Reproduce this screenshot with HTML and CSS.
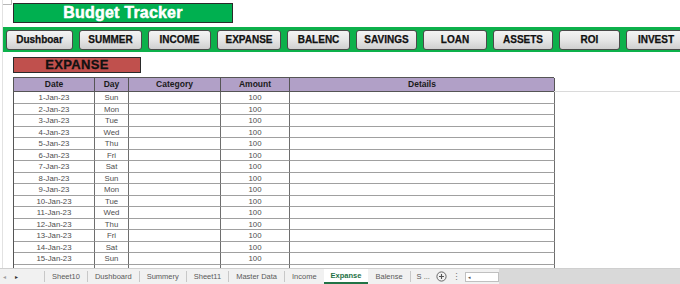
FILE: index.html
```html
<!DOCTYPE html>
<html>
<head>
<meta charset="utf-8">
<link rel="stylesheet" href="styles.css">
</head>
<body>
<div class="app">
  <div class="sheet">
    <div class="top-row">
      <div class="corner"></div>
      <div class="title">Budget Tracker</div>
    </div>
    <div class="nav">
      <div class="btn">Dushboar</div>
      <div class="btn">SUMMER</div>
      <div class="btn">INCOME</div>
      <div class="btn">EXPANSE</div>
      <div class="btn">BALENC</div>
      <div class="btn">SAVINGS</div>
      <div class="btn">LOAN</div>
      <div class="btn">ASSETS</div>
      <div class="btn">ROI</div>
      <div class="btn">INVEST</div>
    </div>
    <div class="section-title">EXPANSE</div>
    <div class="table-row">
      <div class="table">
        <div class="th">Date</div><div class="th">Day</div><div class="th">Category</div><div class="th">Amount</div><div class="th">Details</div>
        <div class="td">1-Jan-23</div><div class="td">Sun</div><div class="td"></div><div class="td">100</div><div class="td"></div>
        <div class="td">2-Jan-23</div><div class="td">Mon</div><div class="td"></div><div class="td">100</div><div class="td"></div>
        <div class="td">3-Jan-23</div><div class="td">Tue</div><div class="td"></div><div class="td">100</div><div class="td"></div>
        <div class="td">4-Jan-23</div><div class="td">Wed</div><div class="td"></div><div class="td">100</div><div class="td"></div>
        <div class="td">5-Jan-23</div><div class="td">Thu</div><div class="td"></div><div class="td">100</div><div class="td"></div>
        <div class="td">6-Jan-23</div><div class="td">Fri</div><div class="td"></div><div class="td">100</div><div class="td"></div>
        <div class="td">7-Jan-23</div><div class="td">Sat</div><div class="td"></div><div class="td">100</div><div class="td"></div>
        <div class="td">8-Jan-23</div><div class="td">Sun</div><div class="td"></div><div class="td">100</div><div class="td"></div>
        <div class="td">9-Jan-23</div><div class="td">Mon</div><div class="td"></div><div class="td">100</div><div class="td"></div>
        <div class="td">10-Jan-23</div><div class="td">Tue</div><div class="td"></div><div class="td">100</div><div class="td"></div>
        <div class="td">11-Jan-23</div><div class="td">Wed</div><div class="td"></div><div class="td">100</div><div class="td"></div>
        <div class="td">12-Jan-23</div><div class="td">Thu</div><div class="td"></div><div class="td">100</div><div class="td"></div>
        <div class="td">13-Jan-23</div><div class="td">Fri</div><div class="td"></div><div class="td">100</div><div class="td"></div>
        <div class="td">14-Jan-23</div><div class="td">Sat</div><div class="td"></div><div class="td">100</div><div class="td"></div>
        <div class="td">15-Jan-23</div><div class="td">Sun</div><div class="td"></div><div class="td">100</div><div class="td"></div>
        <div class="td">16-Jan-23</div><div class="td">Mon</div><div class="td"></div><div class="td">100</div><div class="td"></div>
      </div>
      <div class="filler"></div>
    </div>
  </div>
  <div class="tabbar">
    <div class="arrows"><span class="arr">&#9666;</span><span class="arr dark">&#9656;</span></div>
    <div class="tab">Sheet10</div>
    <div class="tab">Dushboard</div>
    <div class="tab">Summery</div>
    <div class="tab">Sheet11</div>
    <div class="tab">Master Data</div>
    <div class="tab">Income</div>
    <div class="tab active">Expanse</div>
    <div class="tab">Balense</div>
    <div class="tab more">S ...</div>
    <div class="add">
      <svg width="11" height="11" viewBox="0 0 11 11"><circle cx="5.5" cy="5.5" r="4.6" fill="none" stroke="#666" stroke-width="1"/><path d="M5.5 3v5M3 5.5h5" stroke="#555" stroke-width="1.1"/></svg>
    </div>
    <div class="dots">&#8942;</div>
    <div class="hscroll">
      <div class="hthumb"><span class="harr">&#9666;</span></div>
      <div class="htrack"></div>
    </div>
  </div>
</div>
</body>
</html>
```

FILE: styles.css
```css
* { box-sizing: border-box; }
html, body { margin: 0; padding: 0; }
body {
  width: 680px;
  height: 284px;
  overflow: hidden;
  background: #fff;
  font-family: "Liberation Sans", Arial, sans-serif;
}
.app {
  display: flex;
  flex-direction: column;
  height: 284px;
}
.sheet {
  flex: 1;
  overflow: hidden;
  min-height: 0;
  border-left: 1px solid #e2e2e2;
  margin-left: 2px;
}
.top-row {
  display: flex;
  align-items: flex-start;
}
.corner {
  width: 9px;
  height: 5px;
  border-right: 1px solid #b8b8b8;
  border-bottom: 1px solid #b8b8b8;
}
.title {
  margin-top: 3px;
  margin-left: 1px;
  width: 220px;
  height: 20px;
  background: #00b050;
  border: 1px solid #2a2a2a;
  color: #fff;
  font-weight: bold;
  font-size: 16px;
  line-height: 18px;
  text-align: center;
  letter-spacing: 0.2px;
  -webkit-text-stroke: 0.5px #fff;
}
.nav {
  margin-top: 4px;
  height: 25px;
  background: #0db14b;
  padding: 3px 0 2px 3px;
  display: grid;
  grid-template-columns: 67px 63px 63px 64px 63px 61px 64px 60px 61px 60px;
  column-gap: 6px;
}
.btn {
  height: 20px;
  border: 1px solid #4a4a4a;
  border-radius: 3px;
  background: linear-gradient(#f4f4f4 0%, #e6e6e6 50%, #cfcfcf 100%);
  color: #111;
  font-weight: bold;
  font-size: 10px;
  line-height: 18px;
  text-align: center;
  white-space: nowrap;
  overflow: hidden;
  -webkit-text-stroke: 0.25px #111;
}
.section-title {
  margin: 5px 0 0 10px;
  width: 128px;
  height: 16px;
  background: #c0504d;
  border: 1px solid #2a2a2a;
  color: #111;
  font-weight: bold;
  font-size: 13px;
  line-height: 14px;
  text-align: center;
  letter-spacing: 0.3px;
  -webkit-text-stroke: 0.3px #111;
}
.table-row {
  display: flex;
  margin-top: 4px;
  margin-left: 10px;
  align-items: flex-start;
}
.table {
  display: grid;
  grid-template-columns: 81px 34px 92px 69px 265px;
  grid-template-rows: 14px;
  grid-auto-rows: 11.5px;
  width: 541px;
  border-top: 1px solid #555;
  border-left: 1px solid #555;
}
.th {
  background: #b1a0c7;
  border-right: 1px solid #555;
  border-bottom: 1px solid #555;
  font-weight: bold;
  font-size: 8.5px;
  line-height: 13px;
  color: #1a1a1a;
  text-align: center;
}
.td {
  border-right: 1px solid #6e6e6e;
  border-bottom: 1px solid #a0a0a0;
  font-size: 7.8px;
  line-height: 11px;
  color: #4d4d4d;
  text-align: center;
  white-space: nowrap;
  overflow: hidden;
}
.filler {
  flex: 1;
  height: 15px;
  border-bottom: 1px solid #dadada;
}
.tabbar {
  height: 16px;
  flex: none;
  display: flex;
  align-items: stretch;
  background: #f1f1f1;
  border-top: 1px solid #cfcfcf;
  font-size: 7.5px;
  color: #5a5a5a;
}
.arrows {
  width: 45px;
  display: flex;
  align-items: center;
  padding-left: 3px;
  gap: 9px;
  border-right: 1px solid #c8c8c8;
  margin: 2px 0;
  font-size: 6px;
  color: #a0a0a0;
}
.arr.dark { color: #333; }
.tab {
  padding: 0 7px;
  display: flex;
  align-items: center;
  border-right: 1px solid #c8c8c8;
  margin: 2px 0;
  white-space: nowrap;
}
.tab.active {
  margin: 0 0 0 -1px;
  padding: 0 7px 0 7px;
  background: #fff;
  color: #1e7145;
  font-weight: bold;
  border-right: none;
  border-bottom: 2px solid #217346;
}
.tab.more {
  border-right: none;
  padding: 0 3px 0 6px;
}
.add {
  display: flex;
  align-items: center;
  padding-left: 3px;
}
.dots {
  display: flex;
  align-items: center;
  padding-left: 5px;
  font-size: 9px;
  color: #777;
}
.hscroll {
  flex: 1;
  display: flex;
  align-items: center;
  padding-left: 4px;
}
.hthumb {
  width: 34px;
  height: 10px;
  background: #fff;
  border: 1px solid #c0c0c0;
  display: flex;
  align-items: center;
  padding-left: 2px;
  font-size: 5px;
  color: #555;
}
.htrack {
  flex: 1;
  align-self: stretch;
  background: #d9d9d9;
}
```
